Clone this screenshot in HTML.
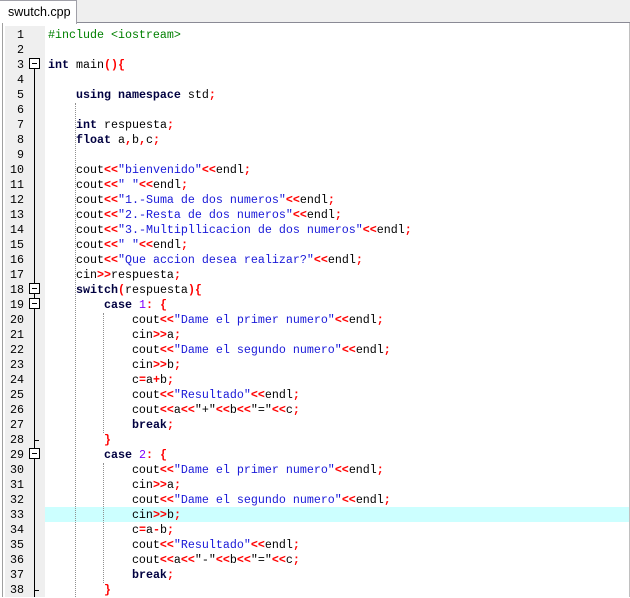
<!DOCTYPE html>
<html><head><meta charset="utf-8"><style>
body{margin:0;width:630px;height:597px;overflow:hidden;background:#fff;position:relative;font-family:"Liberation Mono",monospace}
#tabbar{position:absolute;left:0;top:0;width:630px;height:22px;background:#efefef;border-bottom:1px solid #8a8a95}
#tab{position:absolute;left:0;top:0;width:77px;height:24px;background:#fff;border:1px solid #a0a0a8;border-bottom:none;border-left:none;font:12.5px "Liberation Sans",sans-serif;color:#000;line-height:23px;padding-left:8px;box-sizing:border-box}
#lborder{position:absolute;left:2px;top:23px;width:1px;height:574px;background:#a0a0a0}
#gut{position:absolute;left:5px;top:26px;width:40px;height:571px;background:#efefef}
#fold{position:absolute;left:34px;top:69px;width:1px;height:528px;background:#000}
.box{position:absolute;left:29px;width:11px;height:11px;border:1px solid #000;background:#fff;box-sizing:border-box}
.box:after{content:"";position:absolute;left:2px;top:4px;width:5px;height:1px;background:#000}
.ln{position:absolute;left:5px;width:19px;text-align:right;font-size:11.67px;line-height:15px;color:#000}
.l{position:absolute;left:48px;font-size:11.67px;line-height:15px;white-space:pre;color:#000}
.k{font-weight:bold;color:#000040}
.o{font-weight:bold;color:#f00}
.s{color:#1818d8}
.n{color:#8000ff}
.p{color:#008000}
.g{position:absolute;width:0;border-left:1px dotted #909090}
#hl{position:absolute;left:45px;top:507px;width:585px;height:15px;background:#ccffff}
#rb{position:absolute;left:629px;top:23px;width:1px;height:574px;background:#c0c0c0}
</style></head><body>
<div id="tabbar"></div><div id="tab">swutch.cpp</div>
<div id="lborder"></div>
<div id="gut"></div>
<div id="hl"></div>
<div id="rb"></div>
<div id="fold"></div>
<div class="box" style="top:58px"></div>
<div class="box" style="top:283px"></div>
<div class="box" style="top:298px"></div>
<div class="box" style="top:448px"></div>
<div style="position:absolute;left:34px;top:440px;width:5px;height:1px;background:#000"></div>
<div style="position:absolute;left:34px;top:590px;width:5px;height:1px;background:#000"></div>
<div class="g" style="left:75px;top:103px;height:494px"></div>
<div class="g" style="left:103px;top:313px;height:120px"></div>
<div class="g" style="left:103px;top:463px;height:120px"></div>
<div id="code"></div>
<script>
var L=[
'<span class="p">#include &lt;iostream&gt;</span>','',
'<span class="k">int</span> main<span class="o">(){</span>','',
'    <span class="k">using namespace</span> std<span class="o">;</span>','',
'    <span class="k">int</span> respuesta<span class="o">;</span>',
'    <span class="k">float</span> a<span class="o">,</span>b<span class="o">,</span>c<span class="o">;</span>','',
'    cout<span class="o">&lt;&lt;</span><span class="s">"bienvenido"</span><span class="o">&lt;&lt;</span>endl<span class="o">;</span>',
'    cout<span class="o">&lt;&lt;</span><span class="s">" "</span><span class="o">&lt;&lt;</span>endl<span class="o">;</span>',
'    cout<span class="o">&lt;&lt;</span><span class="s">"1.-Suma de dos numeros"</span><span class="o">&lt;&lt;</span>endl<span class="o">;</span>',
'    cout<span class="o">&lt;&lt;</span><span class="s">"2.-Resta de dos numeros"</span><span class="o">&lt;&lt;</span>endl<span class="o">;</span>',
'    cout<span class="o">&lt;&lt;</span><span class="s">"3.-Multipllicacion de dos numeros"</span><span class="o">&lt;&lt;</span>endl<span class="o">;</span>',
'    cout<span class="o">&lt;&lt;</span><span class="s">" "</span><span class="o">&lt;&lt;</span>endl<span class="o">;</span>',
'    cout<span class="o">&lt;&lt;</span><span class="s">"Que accion desea realizar?"</span><span class="o">&lt;&lt;</span>endl<span class="o">;</span>',
'    cin<span class="o">&gt;&gt;</span>respuesta<span class="o">;</span>',
'    <span class="k">switch</span><span class="o">(</span>respuesta<span class="o">){</span>',
'        <span class="k">case</span> <span class="n">1</span><span class="o">: {</span>',
'            cout<span class="o">&lt;&lt;</span><span class="s">"Dame el primer numero"</span><span class="o">&lt;&lt;</span>endl<span class="o">;</span>',
'            cin<span class="o">&gt;&gt;</span>a<span class="o">;</span>',
'            cout<span class="o">&lt;&lt;</span><span class="s">"Dame el segundo numero"</span><span class="o">&lt;&lt;</span>endl<span class="o">;</span>',
'            cin<span class="o">&gt;&gt;</span>b<span class="o">;</span>',
'            c<span class="o">=</span>a<span class="o">+</span>b<span class="o">;</span>',
'            cout<span class="o">&lt;&lt;</span><span class="s">"Resultado"</span><span class="o">&lt;&lt;</span>endl<span class="o">;</span>',
'            cout<span class="o">&lt;&lt;</span>a<span class="o">&lt;&lt;</span>"+"<span class="o">&lt;&lt;</span>b<span class="o">&lt;&lt;</span>"="<span class="o">&lt;&lt;</span>c<span class="o">;</span>',
'            <span class="k">break</span><span class="o">;</span>',
'        <span class="o">}</span>',
'        <span class="k">case</span> <span class="n">2</span><span class="o">: {</span>',
'            cout<span class="o">&lt;&lt;</span><span class="s">"Dame el primer numero"</span><span class="o">&lt;&lt;</span>endl<span class="o">;</span>',
'            cin<span class="o">&gt;&gt;</span>a<span class="o">;</span>',
'            cout<span class="o">&lt;&lt;</span><span class="s">"Dame el segundo numero"</span><span class="o">&lt;&lt;</span>endl<span class="o">;</span>',
'            cin<span class="o">&gt;&gt;</span>b<span class="o">;</span>',
'            c<span class="o">=</span>a<span class="o">-</span>b<span class="o">;</span>',
'            cout<span class="o">&lt;&lt;</span><span class="s">"Resultado"</span><span class="o">&lt;&lt;</span>endl<span class="o">;</span>',
'            cout<span class="o">&lt;&lt;</span>a<span class="o">&lt;&lt;</span>"-"<span class="o">&lt;&lt;</span>b<span class="o">&lt;&lt;</span>"="<span class="o">&lt;&lt;</span>c<span class="o">;</span>',
'            <span class="k">break</span><span class="o">;</span>',
'        <span class="o">}</span>'];
var h='';
for(var i=0;i<L.length;i++){var t=28+15*i;
h+='<div class="ln" style="top:'+t+'px">'+(i+1)+'</div><div class="l" style="top:'+t+'px">'+L[i]+'</div>';}
document.getElementById('code').innerHTML=h;
</script>
</body></html>
